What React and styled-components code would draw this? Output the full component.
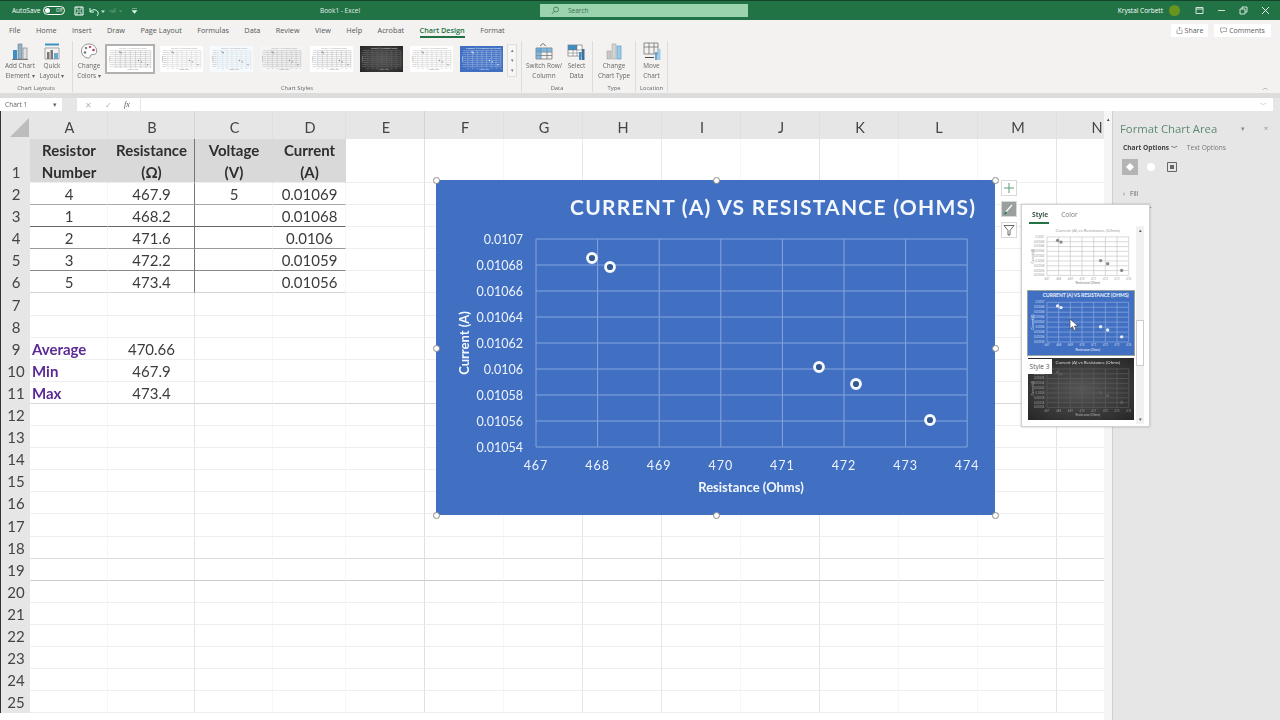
import styled, { createGlobalStyle } from "styled-components";

const GlobalStyle = createGlobalStyle`
  html, body { margin: 0; padding: 0; background: #e6e6e6; }
  body { font-family: "Open Sans", "Liberation Sans", sans-serif; overflow: hidden; }
  #root { width: 1280px; height: 720px; overflow: hidden; }
`;

const Page = styled.div`
  width: 1280px;
  height: 720px;
  display: flex;
  flex-direction: column;
  overflow: hidden;
  position: relative;
  filter: blur(0.35px);
`;

/* title bar */
const TitleBar = styled.header`
  height: 20px;
  flex: none;
  box-sizing: border-box;
  background: #217346;
  border-top: 1px solid #14432a;
  display: grid;
  grid-template-columns: 540px 208px 1fr;
  align-items: center;
  color: #fff;
  font-size: 6.5px;
`;
const QuickAccess = styled.div`
  display: flex;
  align-items: center;
  position: relative;
  padding-left: 12px;
  height: 100%;
`;
const AutoSaveToggle = styled.span`
  width: 22px;
  height: 9px;
  margin: 0 8px 0 3px;
  box-sizing: border-box;
  border: 1px solid #fff;
  border-radius: 5px;
  display: flex;
  align-items: center;
  justify-content: space-between;
  padding: 0 2px 0 1px;
  font-size: 4.5px;
  line-height: 7px;
  &::before {
    content: "";
    width: 5px;
    height: 5px;
    border-radius: 50%;
    background: #fff;
  }
`;
const CustomizeSlot = styled.span`
  margin-left: 5px;
  display: flex;
`;
const DocName = styled.span`
  position: absolute;
  left: 320px;
  color: #e4efe8;
`;
const SearchBox = styled.div`
  height: 13px;
  background: #9bd3ae;
  display: flex;
  align-items: center;
  gap: 9px;
  padding-left: 11px;
  color: #3f6f52;
`;
const WindowArea = styled.div`
  display: flex;
  align-items: center;
  justify-content: flex-end;
  height: 100%;
  padding-right: 10px;
  gap: 13px;
`;
const UserName = styled.span`
  margin-right: -7px;
`;
const Avatar = styled.span`
  width: 11px;
  height: 11px;
  border-radius: 50%;
  background: #6a9420;
  margin-right: 2px;
`;

/* tabs */
const TabBar = styled.nav`
  height: 20px;
  flex: none;
  background: #f3f2f1;
  display: flex;
  align-items: center;
  padding-left: 9px;
  gap: 15.4px;
  font-size: 7.3px;
  color: #555;
  position: relative;
`;
const Tab = styled.span`
  position: relative;
  color: ${({ $active }) => ($active ? "#217346" : "#555")};
  font-weight: ${({ $active }) => ($active ? 600 : 400)};
  &::after {
    content: "";
    display: ${({ $active }) => ($active ? "block" : "none")};
    position: absolute;
    left: 0;
    right: 0;
    bottom: -3px;
    height: 2px;
    background: #217346;
  }
`;
const TabActions = styled.div`
  margin-left: auto;
  display: flex;
  gap: 6px;
  padding-right: 9px;
`;
const TabAction = styled.span`
  height: 13px;
  width: ${({ $w }) => $w}px;
  background: #fff;
  display: flex;
  align-items: center;
  justify-content: center;
  gap: 2px;
  font-size: 7px;
  color: #5a5a5a;
`;

/* ribbon */
const Ribbon = styled.section`
  height: 53px;
  flex: none;
  background: #f3f2f1;
  display: flex;
  border-bottom: 5px solid #dcdcdc;
  box-sizing: content-box;
  position: relative;
`;
const Group = styled.div`
  width: ${({ $w }) => $w}px;
  flex: none;
  box-sizing: border-box;
  margin: 1px 0 1px;
  border-right: 1px solid #dcdcdc;
  display: flex;
  flex-direction: column;
  align-items: center;
`;
const GroupBody = styled.div`
  flex: 1;
  width: 100%;
  display: flex;
  justify-content: ${({ $start }) => ($start ? "flex-start" : "center")};
  align-items: flex-start;
  padding-top: 1px;
`;
const GroupLabel = styled.span`
  font-size: 5.8px;
  line-height: 8px;
  color: #666;
`;
const RibbonButton = styled.div`
  width: ${({ $w }) => $w || 32}px;
  flex: none;
  display: flex;
  flex-direction: column;
  align-items: center;
  font-size: 6.4px;
  line-height: 9.5px;
  color: #666;
  text-align: center;
  white-space: nowrap;
  svg { display: block; margin-bottom: 1px; }
`;
const Gallery = styled.div`
  display: flex;
  gap: 3px;
  padding-top: 2px;
`;
const GalleryItem = styled.div`
  width: ${({ $selected }) => ($selected ? 50 : 47)}px;
  height: 30px;
  box-sizing: border-box;
  border: 2px solid ${({ $selected }) => ($selected ? "#b1b1b1" : "transparent")};
  svg { display: block; width: 100%; height: 100%; }
`;
const GalleryScroller = styled.div`
  width: 8px;
  height: 31px;
  margin-left: -1px;
  display: flex;
  flex-direction: column;
  border: 1px solid #ddd;
  background: #f6f6f6;
  color: #777;
  font-size: 5px;
  line-height: 10px;
  text-align: center;
`;
const RibbonChevron = styled.span`
  position: absolute;
  right: 11px;
  bottom: 0px;
  color: #888;
  font-size: 7px;
`;

/* formula bar */
const FormulaBar = styled.div`
  height: 13px;
  flex: none;
  background: #e6e6e6;
  display: flex;
  font-size: 6.6px;
  color: #666;
`;
const NameBox = styled.div`
  width: 62px;
  background: #fff;
  display: flex;
  align-items: center;
  justify-content: space-between;
  padding: 0 5px;
  box-sizing: border-box;
`;
const FormulaButtons = styled.div`
  width: 63px;
  margin-left: 15px;
  background: #fff;
  display: flex;
  align-items: center;
  gap: 13px;
  padding-left: 8px;
  box-sizing: border-box;
  color: #b5b5b5;
  font-size: 8px;
`;
const Fx = styled.i`
  color: #555;
  font-family: "Liberation Serif", serif;
  margin-left: -1px;
`;
const FormulaInput = styled.div`
  flex: 1;
  margin-left: 1px;
  background: #fff;
  display: flex;
  justify-content: flex-end;
  align-items: center;
  padding-right: 6px;
  color: #888;
`;
const FormulaEnd = styled.div`
  width: 7px;
`;

/* sheet */
const Workspace = styled.main`
  flex: 1;
  display: flex;
  min-height: 0;
`;
const Sheet = styled.div`
  width: 1104px;
  flex: none;
  position: relative;
  overflow: hidden;
  background: #fff;
`;
const Grid = styled.div`
  display: grid;
  grid-template-columns: 30px 78px 87px 78px 73px 79px repeat(9, 79px);
  grid-template-rows: 28px 44px repeat(25, 22.1px);
  font-family: Lato, "Open Sans", sans-serif;
  font-size: 15px;
  color: #3c3c3c;
`;
const Corner = styled.div`
  background: #e6e6e6;
  position: relative;
  border-left: 1px solid #333;
  &::after {
    content: "";
    position: absolute;
    right: 1px;
    bottom: 2px;
    border-style: solid;
    border-width: 0 0 19px 19px;
    border-color: transparent transparent #bdbdbd transparent;
  }
`;
const ColHead = styled.div`
  background: #e6e6e6;
  text-align: center;
  line-height: 34px;
  font-size: 14.5px;
  color: #444;
  padding-left: 1px;
  box-shadow: inset -1px 0 0 ${({ $strong }) => ($strong ? "#d4d4d4" : "#e0e0e0")};
`;
const RowHead = styled.div`
  background: #e6e6e6;
  color: #444;
  font-size: 15px;
  box-sizing: border-box;
  display: flex;
  align-items: flex-end;
  justify-content: center;
  line-height: 22px;
  padding-left: 1px;
  border-left: 1px solid #333;
`;
const Cell = styled.div`
  box-sizing: border-box;
  border-right: 1px solid ${({ $rightLine }) => $rightLine || "#f6f6f6"};
  border-bottom: 1px solid ${({ $bottomLine }) => $bottomLine || "#eeeeee"};
  background: ${({ $head }) => ($head ? "#d9d9d9" : "#fff")};
  color: ${({ $label, $head }) => ($label ? "#5b2a96" : $head ? "#2e2e2e" : "#3c3c3c")};
  font-weight: ${({ $head, $label }) => ($head || $label ? 700 : 400)};
  text-align: ${({ $label }) => ($label ? "left" : "center")};
  padding-left: ${({ $label }) => ($label ? "2px" : "1px")};
  white-space: pre-line;
  line-height: 22px;
`;

/* chart */
const ChartBox = styled.div`
  position: absolute;
  left: 436px;
  top: 69px;
  width: 559px;
  height: 335px;
  background: #4170c2;
  font-family: Lato, "Open Sans", sans-serif;
  svg { display: block; }
`;
const Handle = styled.span`
  position: absolute;
  left: ${({ $x }) => $x}%;
  top: ${({ $y }) => $y}%;
  width: 5px;
  height: 5px;
  margin: -3px 0 0 -3px;
  border: 1px solid #8a8a8a;
  border-radius: 50%;
  background: #fff;
`;
const ChartTools = styled.div`
  position: absolute;
  left: 1001px;
  top: 69px;
  display: flex;
  flex-direction: column;
  gap: 5px;
`;
const ChartTool = styled.span`
  width: 16px;
  height: 16px;
  box-sizing: border-box;
  background: ${({ $active }) => ($active ? "#9aa0a0" : "#fff")};
  border: 1px solid #d8d8d8;
  display: flex;
  align-items: center;
  justify-content: center;
`;

/* style popup */
const StylePopup = styled.div`
  position: absolute;
  left: 1021px;
  top: 204px;
  width: 129px;
  height: 223px;
  box-sizing: border-box;
  background: #fff;
  border: 1px solid #cfd4d2;
  box-shadow: 0 0 2px rgba(0, 0, 0, 0.25);
  display: flex;
  flex-direction: column;
  padding: 4px 5px 0 6px;
  z-index: 3;
`;
const PopupTabs = styled.div`
  display: flex;
  gap: 13px;
  font-size: 6.6px;
  height: 15px;
  padding-left: 4px;
  color: #666;
`;
const PopupTab = styled.span`
  position: relative;
  height: 13px;
  line-height: 11px;
  font-weight: ${({ $active }) => ($active ? 700 : 400)};
  color: ${({ $active }) => ($active ? "#3f5a4a" : "#777")};
  &::after {
    content: "";
    display: ${({ $active }) => ($active ? "block" : "none")};
    position: absolute;
    left: -3px;
    right: -1px;
    bottom: -2px;
    height: 2px;
    background: #217346;
  }
`;
const PopupBody = styled.div`
  display: flex;
  gap: 2px;
  flex: 1;
  margin-top: 2px;
`;
const ThumbList = styled.div`
  width: 106px;
  display: flex;
  flex-direction: column;
  gap: 3px;
`;
const Thumb = styled.div`
  height: ${({ $h }) => $h}px;
  position: relative;
  outline: ${({ $selected }) => ($selected ? "1.5px solid #9aa5a0" : "none")};
  > svg:first-child { display: block; width: 100%; height: 100%; }
`;
const ThumbTip = styled.span`
  position: absolute;
  left: -1px;
  top: 1px;
  width: 25px;
  height: 15px;
  background: #fff;
  font-size: 6.5px;
  line-height: 15px;
  text-align: center;
  color: #555;
`;
const Cursor = styled.svg`
  position: absolute;
  left: 41px;
  top: 28px;
`;
const PopupScroll = styled.div`
  width: 8px;
  height: 198px;
  background: #f1f1f1;
  display: flex;
  flex-direction: column;
  justify-content: space-between;
  align-items: center;
  color: #555;
  font-size: 5px;
  line-height: 9px;
  position: relative;
  &::before {
    content: "";
    position: absolute;
    top: 94px;
    left: 0;
    width: 8px;
    height: 46px;
    background: #fff;
    border: 1px solid #ccc;
    box-sizing: border-box;
  }
`;

/* side panel */
const SheetScroll = styled.div`
  width: 9px;
  flex: none;
  background: #f5f5f5;
  border-right: 1px solid #cfcfcf;
  box-sizing: border-box;
  color: #444;
  font-size: 5px;
  text-align: center;
  padding-top: 5px;
`;
const Panel = styled.aside`
  flex: 1;
  background: #e6e6e6;
  padding: 10px 8px 0 7px;
  font-size: 6.6px;
  color: #666;
`;
const PanelTitle = styled.div`
  display: flex;
  justify-content: space-between;
  font-size: 11.3px;
  line-height: 15px;
  color: #5d8a71;
  padding-right: 4px;
`;
const PanelTitleActions = styled.div`
  display: flex;
  gap: 19px;
  color: #888;
  font-size: 7px;
`;
const PanelTabs = styled.div`
  display: flex;
  gap: 9px;
  margin-top: 7px;
  padding-left: 3px;
  font-size: 6.6px;
  line-height: 9px;
`;
const PanelTab = styled.span`
  font-weight: ${({ $active }) => ($active ? 700 : 400)};
  color: ${({ $active }) => ($active ? "#444" : "#777")};
`;
const PanelIcons = styled.div`
  display: flex;
  gap: 5px;
  margin-top: 7px;
  padding-left: 2px;
`;
const PanelIcon = styled.span`
  width: 16px;
  height: 16px;
  background: ${({ $active }) => ($active ? "#b4b4b4" : "transparent")};
  display: flex;
  align-items: center;
  justify-content: center;
`;
const PanelRow = styled.div`
  margin-top: ${({ $tight }) => ($tight ? 7 : 15)}px;
  padding-left: 3px;
  display: flex;
  gap: 5px;
  line-height: 8px;
  color: #666;
`;

/* drawings */
const Ico = ({ w = 18, h = 18, children }) => (
  <svg width={w} height={h} viewBox={`0 0 ${w} ${h}`} fill="none">
    {children}
  </svg>
);

const BarsIcon = () => (
  <Ico>
    <rect x="2" y="8" width="4" height="9" fill="#3f8fc4" />
    <rect x="7" y="2" width="4" height="15" fill="#8fb4cf" stroke="#777" strokeWidth=".6" />
    <rect x="12" y="6" width="4" height="11" fill="#e2e2e2" stroke="#777" strokeWidth=".6" />
    <path d="M1 17.5H17" stroke="#777" />
  </Ico>
);
const QuickIcon = () => (
  <Ico>
    <rect x="2" y="1.5" width="14" height="2" fill="#3f8fc4" />
    <path d="M2 6H16V17H2Z" stroke="#888" strokeWidth=".7" />
    <rect x="4" y="10" width="2.5" height="7" fill="#777" />
    <rect x="7.5" y="8" width="2.5" height="9" fill="#777" />
    <rect x="11" y="11" width="4" height="6" fill="#6ca7cf" />
  </Ico>
);
const PaletteIcon = () => (
  <Ico>
    <path d="M9 2C4 2 1.5 5.500 1.500 9c0 4 3.500 7 7 7 2 0 1.500-2 2.500-3s4.500.5 5.500-2.500C17.500 6 14 2 9 2Z" fill="#fff" stroke="#777" strokeWidth=".8" />
    <circle cx="6" cy="6" r="1.300" fill="#888" />
    <circle cx="10" cy="5" r="1.300" fill="#c06060" />
    <circle cx="13.500" cy="8" r="1.300" fill="#b04060" />
    <circle cx="5" cy="10.500" r="1.300" fill="#777" />
  </Ico>
);
const SwitchIcon = () => (
  <Ico w={20}>
    <path d="M2 6H18V17H2ZM2 10H18M2 13.500H18M7 6V17M13 6V17" stroke="#777" strokeWidth=".8" />
    <rect x="2" y="6" width="5" height="11" fill="#5aa0cf" opacity=".7" />
    <rect x="2" y="6" width="16" height="4" fill="#5aa0cf" opacity=".7" />
    <path d="M6 4L9 1.500 12 4" stroke="#555" strokeWidth=".8" />
  </Ico>
);
const SelectIcon = () => (
  <Ico w={20}>
    <rect x="1" y="3" width="14" height="11" fill="#fff" stroke="#777" strokeWidth=".7" />
    <rect x="1" y="3" width="9" height="5" fill="#3f8fc4" />
    <path d="M1 8H15M1 11H15M6 3V14M10 3V14" stroke="#777" strokeWidth=".6" />
    <rect x="12" y="10" width="2.500" height="8" fill="#3f8fc4" />
    <rect x="15" y="7" width="2.500" height="11" fill="#3f6f99" />
  </Ico>
);
const ChartTypeIcon = () => (
  <Ico>
    <rect x="2" y="9" width="4" height="8" fill="#c9c9c9" stroke="#999" strokeWidth=".5" />
    <rect x="7" y="2" width="4" height="15" fill="#d5d5d5" stroke="#999" strokeWidth=".5" />
    <rect x="12" y="4" width="4" height="13" fill="#9ecbe8" stroke="#5b9dc9" strokeWidth=".7" />
  </Ico>
);
const MoveIcon = () => (
  <Ico w={20}>
    <path d="M2 1H16V12H2ZM2 5H16M7 1V12M12 1V12" stroke="#666" strokeWidth=".7" />
    <path d="M3 15.500H12" stroke="#333" strokeWidth=".9" />
    <rect x="13" y="10" width="2.500" height="8" fill="#6ca7cf" />
    <rect x="16" y="7" width="2.500" height="11" fill="#9ecbe8" />
  </Ico>
);

const POINTS = [
  [156, 78],
  [174, 87],
  [383, 187],
  [420, 204],
  [494, 240],
];
const Y_TICKS = ["0.0107", "0.01068", "0.01066", "0.01064", "0.01062", "0.0106", "0.01058", "0.01056", "0.01054"];
const X_TICKS = ["467", "468", "469", "470", "471", "472", "473", "474"];

const MiniChart = ({ bg, grid, dot, ink, title, heading, glow }) => (
  <svg viewBox="0 0 559 335" preserveAspectRatio="none" fontFamily="Lato, 'Open Sans', sans-serif">
    {glow && (
      <defs>
        <radialGradient id="darkGlow" cx="50%" cy="50%" r="70%">
          <stop offset="0%" stopColor="#565656" />
          <stop offset="100%" stopColor="#262626" />
        </radialGradient>
      </defs>
    )}
    <rect width="559" height="335" fill={glow ? "url(#darkGlow)" : bg} />
    <text x={heading ? 531 : 315} y="34" fontSize={heading ? 26 : 24} fontWeight={heading ? 700 : 400} fill={title} textAnchor={heading ? "end" : "middle"}>
      {heading ? "CURRENT (A) VS RESISTANCE (OHMS)" : "Current (A) vs Resistance (Ohms)"}
    </text>
    {Y_TICKS.map((t, i) => (
      <g key={t}>
        <path d={`M100 ${59 + i * 26}H531`} stroke={grid} strokeWidth=".7" vectorEffect="non-scaling-stroke" />
        <text x="87" y={64 + i * 26} fontSize="15" fill={ink} textAnchor="end">
          {t}
        </text>
      </g>
    ))}
    {X_TICKS.map((t, i) => (
      <g key={t}>
        <path d={`M${100 + i * 61.6} 59V267`} stroke={grid} strokeWidth=".7" vectorEffect="non-scaling-stroke" />
        <text x={100 + i * 61.6} y="290" fontSize="15" fill={ink} textAnchor="middle">
          {t}
        </text>
      </g>
    ))}
    <text x="315" y="314" fontSize="16" fontWeight="700" fill={ink} textAnchor="middle">
      Resistance (Ohms)
    </text>
    <text transform="translate(33 163) rotate(-90)" fontSize="16" fontWeight="700" fill={ink} textAnchor="middle">
      Current (A)
    </text>
    {POINTS.map(([x, y]) => (
      <circle key={x} cx={x} cy={y} r="9" fill={dot} />
    ))}
  </svg>
);

const WHITE_MINI = { bg: "#fff", grid: "#c9c9c9", dot: "#8a8a8a", ink: "#9a9a9a", title: "#a0a0a0" };
const BLUE_MINI = { bg: "#4170c2", grid: "#8eaae0", dot: "#e8eef9", ink: "#d4dff2", title: "#eef3fb", heading: true };
const DARK_MINI = { bg: "#333", grid: "#5c5c5c", dot: "#5a5a5a", ink: "#999", title: "#ddd", glow: true };

const GALLERY = [
  WHITE_MINI,
  { ...WHITE_MINI, grid: "#dcdcdc" },
  { ...WHITE_MINI, bg: "#f8fbfd", grid: "#d8e4ec" },
  { ...WHITE_MINI, bg: "#f5f5f5" },
  WHITE_MINI,
  DARK_MINI,
  { ...WHITE_MINI, grid: "#d8d8d8" },
  BLUE_MINI,
];

const TABS = ["File", "Home", "Insert", "Draw", "Page Layout", "Formulas", "Data", "Review", "View", "Help", "Acrobat"];
const COLS = ["A", "B", "C", "D", "E", "F", "G", "H", "I", "J", "K", "L", "M", "N"];

const CELLS = {
  "1A": "Resistor\nNumber",
  "1B": "Resistance\n(Ω)",
  "1C": "Voltage\n(V)",
  "1D": "Current\n(A)",
  "2A": "4", "2B": "467.9", "2C": "5", "2D": "0.01069",
  "3A": "1", "3B": "468.2", "3D": "0.01068",
  "4A": "2", "4B": "471.6", "4D": "0.0106",
  "5A": "3", "5B": "472.2", "5D": "0.01059",
  "6A": "5", "6B": "473.4", "6D": "0.01056",
  "9A": "Average", "9B": "470.66",
  "10A": "Min", "10B": "467.9",
  "11A": "Max", "11B": "473.4",
};

const tableBottom = { 2: "#a8a8a8", 3: "#666", 4: "#999", 5: "#888", 6: "#d4d4d4" };
const wideBottom = { 11: "#d8d8d8", 18: "#dcdcdc", 19: "#cccccc" };
const strongRight = { E: "#e0e0e0", G: "#e8e8e8", H: "#e8e8e8", J: "#e4e4e4", M: "#e4e4e4" };

function cellProps(row, col) {
  const inTable = row <= 6 && "ABCD".includes(col);
  const props = {};
  if (row === 1 && inTable) props.$head = true;
  if (row >= 9 && row <= 11 && col === "A") props.$label = true;
  if (inTable && tableBottom[row]) props.$bottomLine = tableBottom[row];
  if (wideBottom[row]) props.$bottomLine = wideBottom[row];
  if (col === "B") props.$rightLine = row <= 6 ? "#777" : "#e4e4e4";
  else if (strongRight[col]) props.$rightLine = strongRight[col];
  if (row === 1 && inTable && col !== "B") props.$rightLine = "#d9d9d9";
  return props;
}

const HANDLES = [[0, 0], [50, 0], [100, 0], [0, 50], [100, 50], [0, 100], [50, 100], [100, 100]];

export default function App() {
  const rows = Array.from({ length: 25 }, (_, i) => i + 1);
  return (
    <Page>
      <GlobalStyle />
      <TitleBar>
        <QuickAccess>
          AutoSave
          <AutoSaveToggle>Off</AutoSaveToggle>
          <Ico w={12} h={12}>
            <path d="M2 2H10V10H2Z" stroke="#fff" />
            <path d="M4 2V5H8V2M4 10V7H8V10" stroke="#fff" strokeWidth=".7" />
          </Ico>
          <Ico w={22} h={12}>
            <path d="M5 3V7H9M5 7C7 4 11 4 13 7 13.500 8.500 13 10 12 11" stroke="#dfe" />
            <path d="M16 5.500H20L18 8Z" fill="#cfe0d5" />
          </Ico>
          <Ico w={18} h={12}>
            <path d="M8 3V7H4M8 7C6 4.500 3 5 2 7" stroke="#5e9a78" />
            <path d="M12 5.500H15L13.500 7.500Z" fill="#5e9a78" />
          </Ico>
          <CustomizeSlot>
            <Ico w={10} h={12}>
              <path d="M2 3.500H7M2 5.500H7L4.500 8.500Z" fill="#dfe" stroke="#dfe" strokeWidth=".4" />
            </Ico>
          </CustomizeSlot>
          <DocName>Book1 - Excel</DocName>
        </QuickAccess>
        <SearchBox>
          <Ico w={8} h={9}>
            <circle cx="5" cy="3.500" r="2.500" stroke="#3f6f52" strokeWidth=".8" />
            <path d="M3 5.500L.8 8" stroke="#3f6f52" strokeWidth=".8" />
          </Ico>
          Search
        </SearchBox>
        <WindowArea>
          <UserName>Krystal Corbett</UserName>
          <Avatar />
          <Ico w={9} h={9}>
            <path d="M1 1.500H8V7.500H1ZM1 3H8" stroke="#fff" strokeWidth=".8" />
          </Ico>
          <Ico w={9} h={9}>
            <path d="M1 4.500H8" stroke="#fff" strokeWidth=".8" />
          </Ico>
          <Ico w={9} h={9}>
            <path d="M1 3H6V8H1ZM3 3V1H8V6H6" stroke="#fff" strokeWidth=".8" />
          </Ico>
          <Ico w={9} h={9}>
            <path d="M1 1L8 8M8 1L1 8" stroke="#fff" strokeWidth=".9" />
          </Ico>
        </WindowArea>
      </TitleBar>

      <TabBar>
        {TABS.map((t) => (
          <Tab key={t}>{t}</Tab>
        ))}
        <Tab $active>Chart Design</Tab>
        <Tab>Format</Tab>
        <TabActions>
          <TabAction $w={37}>
            <Ico w={7} h={8}>
              <path d="M1 3.500V7.500H6V3.500M3.500 5V1M2 2.500L3.500 1 5 2.500" stroke="#777" strokeWidth=".6" />
            </Ico>
            Share
          </TabAction>
          <TabAction $w={57}>
            <Ico w={7} h={8}>
              <path d="M.5 2H6.500V5.500H3L1.500 7V5.500H.5Z" stroke="#777" strokeWidth=".6" />
            </Ico>
            Comments
          </TabAction>
        </TabActions>
      </TabBar>

      <Ribbon>
        <Group $w={73}>
          <GroupBody>
            <RibbonButton>
              <BarsIcon />
              Add Chart
              <br />
              Element ▾
            </RibbonButton>
            <RibbonButton>
              <QuickIcon />
              Quick
              <br />
              Layout ▾
            </RibbonButton>
          </GroupBody>
          <GroupLabel>Chart Layouts</GroupLabel>
        </Group>
        <Group $w={449}>
          <GroupBody $start>
            <RibbonButton $w={32}>
              <PaletteIcon />
              Change
              <br />
              Colors ▾
            </RibbonButton>
            <Gallery>
              {GALLERY.map((g, i) => (
                <GalleryItem key={i} $selected={i === 0}>
                  <MiniChart {...g} />
                </GalleryItem>
              ))}
              <GalleryScroller>
                <span>▴</span>
                <span>▾</span>
                <span>▾</span>
              </GalleryScroller>
            </Gallery>
          </GroupBody>
          <GroupLabel>Chart Styles</GroupLabel>
        </Group>
        <Group $w={71}>
          <GroupBody>
            <RibbonButton $w={39}>
              <SwitchIcon />
              Switch Row/
              <br />
              Column
            </RibbonButton>
            <RibbonButton $w={26}>
              <SelectIcon />
              Select
              <br />
              Data
            </RibbonButton>
          </GroupBody>
          <GroupLabel>Data</GroupLabel>
        </Group>
        <Group $w={43}>
          <GroupBody>
            <RibbonButton>
              <ChartTypeIcon />
              Change
              <br />
              Chart Type
            </RibbonButton>
          </GroupBody>
          <GroupLabel>Type</GroupLabel>
        </Group>
        <Group $w={32}>
          <GroupBody>
            <RibbonButton>
              <MoveIcon />
              Move
              <br />
              Chart
            </RibbonButton>
          </GroupBody>
          <GroupLabel>Location</GroupLabel>
        </Group>
        <RibbonChevron>︿</RibbonChevron>
      </Ribbon>

      <FormulaBar>
        <NameBox>
          Chart 1<span>▾</span>
        </NameBox>
        <FormulaButtons>
          <span>✕</span>
          <span>✓</span>
          <Fx>fx</Fx>
        </FormulaButtons>
        <FormulaInput>﹀</FormulaInput>
        <FormulaEnd />
      </FormulaBar>

      <Workspace>
        <Sheet>
          <Grid>
            <Corner />
            {COLS.map((c) => (
              <ColHead key={c} $strong={c === "B" || c === "E"}>{c}</ColHead>
            ))}
            {rows.map((r) => [
              <RowHead key={`h${r}`}>{r}</RowHead>,
              ...COLS.map((c) => (
                <Cell key={`${r}${c}`} {...cellProps(r, c)}>
                  {CELLS[`${r}${c}`]}
                </Cell>
              )),
            ])}
          </Grid>

          <ChartBox>
            <svg width="559" height="335" viewBox="0 0 559 335" fontFamily="Lato, 'Open Sans', sans-serif">
              <text x="134" y="35" fontSize="21" fontWeight="700" fill="#f4f8fd" textLength="405" lengthAdjust="spacing">
                CURRENT (A) VS RESISTANCE (OHMS)
              </text>
              {Y_TICKS.map((t, i) => (
                <g key={t}>
                  <path d={`M100 ${59 + i * 26}H531`} stroke="#86a5dd" />
                  <text x="87" y={63.500 + i * 26} fontSize="12.500" fill="#eef3fb" textAnchor="end">
                    {t}
                  </text>
                </g>
              ))}
              {X_TICKS.map((t, i) => (
                <g key={t}>
                  <path d={`M${100 + i * 61.6} 59V267`} stroke="#86a5dd" />
                  <text x={100 + i * 61.6} y="290" fontSize="12.500" fill="#eef3fb" textAnchor="middle" letterSpacing="1">
                    {t}
                  </text>
                </g>
              ))}
              <text x="315" y="312" fontSize="13" fontWeight="700" fill="#f4f8fd" textAnchor="middle">
                Resistance (Ohms)
              </text>
              <text transform="translate(33 163) rotate(-90)" fontSize="13" fontWeight="700" fill="#f4f8fd" textAnchor="middle">
                Current (A)
              </text>
              {POINTS.map(([x, y]) => (
                <circle key={x} cx={x} cy={y} r="4.500" fill="#35598f" stroke="#f6f9fd" strokeWidth="2.800" />
              ))}
            </svg>
            {HANDLES.map(([x, y]) => (
              <Handle key={`${x}-${y}`} $x={x} $y={y} />
            ))}
          </ChartBox>

          <ChartTools>
            <ChartTool>
              <Ico w={12} h={12}>
                <path d="M6 1V11M1 6H11" stroke="#5f9b7c" />
              </Ico>
            </ChartTool>
            <ChartTool $active>
              <Ico w={12} h={12}>
                <path d="M2 10L9 2" stroke="#fff" strokeWidth="1.200" />
                <path d="M1.500 11L3.500 9" stroke="#2e7d5a" strokeWidth="1.800" />
              </Ico>
            </ChartTool>
            <ChartTool>
              <Ico w={12} h={12}>
                <path d="M1 1.500H11L7 6.500V11H5V6.500Z" stroke="#444" strokeWidth=".8" />
              </Ico>
            </ChartTool>
          </ChartTools>
        </Sheet>
        <SheetScroll>▴</SheetScroll>
        <Panel>
          <PanelTitle>
            Format Chart Area
            <PanelTitleActions>
              <span>▾</span>
              <span>×</span>
            </PanelTitleActions>
          </PanelTitle>
          <PanelTabs>
            <PanelTab $active>Chart Options ﹀</PanelTab>
            <PanelTab>Text Options</PanelTab>
          </PanelTabs>
          <PanelIcons>
            <PanelIcon $active>
              <Ico w={10} h={10}>
                <path d="M5 1L9 5 5 9 1 5Z" fill="#fff" />
              </Ico>
            </PanelIcon>
            <PanelIcon>
              <Ico w={10} h={10}>
                <circle cx="5" cy="5" r="4" fill="#fff" />
              </Ico>
            </PanelIcon>
            <PanelIcon>
              <Ico w={10} h={10}>
                <path d="M.5.500H9.500V9.500H.500Z" stroke="#666" />
                <rect x="3" y="3" width="4" height="4" fill="#666" />
              </Ico>
            </PanelIcon>
          </PanelIcons>
          <PanelRow>
            <span>›</span> Fill
          </PanelRow>
          <PanelRow $tight>
            <span>›</span> Border
          </PanelRow>
        </Panel>
      </Workspace>

      <StylePopup>
        <PopupTabs>
          <PopupTab $active>Style</PopupTab>
          <PopupTab>Color</PopupTab>
        </PopupTabs>
        <PopupBody>
          <ThumbList>
            <Thumb $h={62}>
              <MiniChart {...WHITE_MINI} />
            </Thumb>
            <Thumb $h={64} $selected>
              <MiniChart {...BLUE_MINI} />
              <Cursor width="10" height="12" viewBox="0 0 10 12">
                <path d="M1 0V10L3.500 7.500 5 11.500 7 10.500 5.500 7H9Z" fill="#fff" stroke="#333" strokeWidth=".6" />
              </Cursor>
            </Thumb>
            <Thumb $h={62}>
              <MiniChart {...DARK_MINI} />
              <ThumbTip>Style 3</ThumbTip>
            </Thumb>
          </ThumbList>
          <PopupScroll>
            <span>▴</span>
            <span>▾</span>
          </PopupScroll>
        </PopupBody>
      </StylePopup>
    </Page>
  );
}
